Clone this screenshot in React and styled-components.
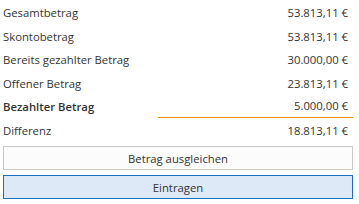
import styled, { createGlobalStyle } from "styled-components";

const GlobalStyle = createGlobalStyle`
  body {
    margin: 0;
    background: #fff;
    font-family: "Open Sans", "Noto Sans", sans-serif;
    color: #333;
  }
`;

const Panel = styled.div`
  width: 350px;
  padding: 1px 6px 0 3px;
  display: flex;
  flex-direction: column;
`;

const Row = styled.div`
  height: 23.5px;
  display: grid;
  grid-template-columns: 155px 1fr;
  align-items: center;
  font-size: 11.3px;
`;

const Label = styled.span`
  font-weight: ${(p) => (p.bold ? 600 : 400)};
`;

const Value = styled.span`
  text-align: right;
  padding-right: 5px;
`;

const AmountInput = styled.div`
  height: 100%;
  box-sizing: border-box;
  display: flex;
  align-items: center;
  justify-content: flex-end;
  padding: 0 5px 0 0;
  border-bottom: 1px solid #f39200;
  margin-bottom: 1px;
`;

const Buttons = styled.div`
  display: flex;
  flex-direction: column;
  gap: 5px;
  margin-top: 4px;
`;

const Button = styled.button`
  height: 24px;
  width: 100%;
  font-family: inherit;
  font-size: 11.3px;
  color: #333;
  cursor: pointer;
  background: ${(p) => (p.primary ? "#dde9f7" : "#fcfcfc")};
  border: 1px solid ${(p) => (p.primary ? "#1b6ec2" : "#c8c8c8")};
  padding: 0;
`;

const rows = [
  ["Gesamtbetrag", "53.813,11 €"],
  ["Skontobetrag", "53.813,11 €"],
  ["Bereits gezahlter Betrag", "30.000,00 €"],
  ["Offener Betrag", "23.813,11 €"],
];

export default function App() {
  return (
    <>
      <GlobalStyle />
      <Panel>
        {rows.map(([label, value]) => (
          <Row key={label}>
            <Label>{label}</Label>
            <Value>{value}</Value>
          </Row>
        ))}
        <Row>
          <Label bold>Bezahlter Betrag</Label>
          <AmountInput>5.000,00 €</AmountInput>
        </Row>
        <Row>
          <Label>Differenz</Label>
          <Value>18.813,11 €</Value>
        </Row>
        <Buttons>
          <Button>Betrag ausgleichen</Button>
          <Button primary>Eintragen</Button>
        </Buttons>
      </Panel>
    </>
  );
}
